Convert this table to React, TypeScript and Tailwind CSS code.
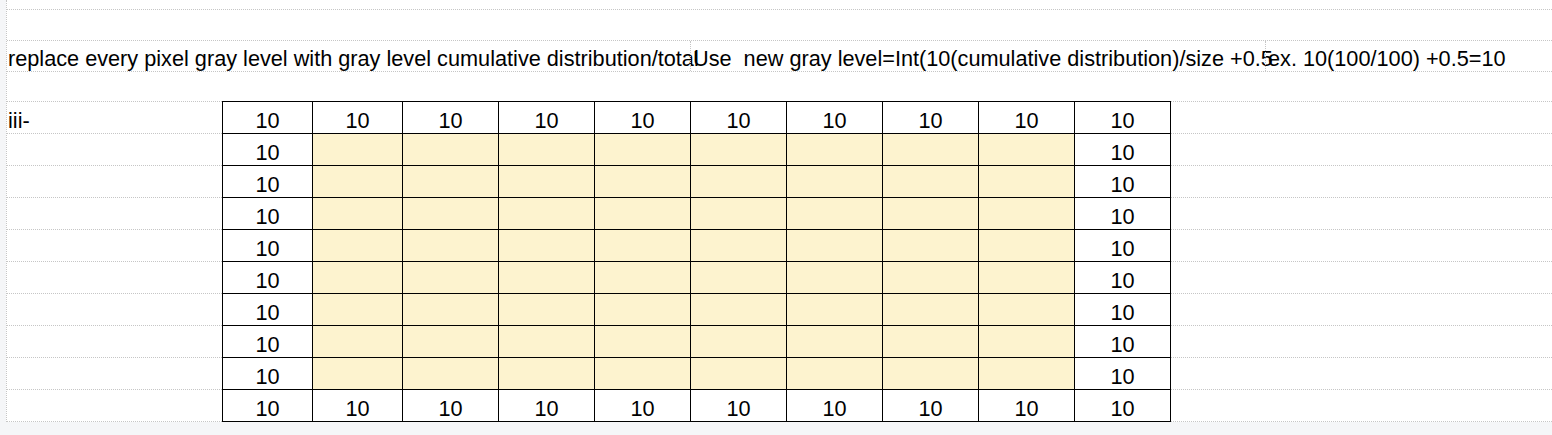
const widths = [90, 90, 96, 96, 96, 96, 96, 96, 96, 96];

const cellW: Record<number, string> = {
  90: "w-[90px]",
  96: "w-[96px]",
};

const Cell = ({ w, filled, value }: { w: number; filled: boolean; value?: string }) => {
  return (
    <div
      className={`${cellW[w]} h-[32px] shrink-0 border-r border-b border-black text-center pt-[7px] leading-[24px] ${
        filled ? "bg-[#fdf3cf]" : "bg-white"
      }`}
    >
      {value}
    </div>
  );
};

const GridTable = () => {
  const rows = Array.from({ length: 10 }, (_, r) => r);
  return (
    <div className="shrink-0 border-l border-t border-l-black border-t-black border-t-dotted">
      {rows.map((r) => (
        <div key={r} className="flex">
          {widths.map((w, c) => {
            const edge = r === 0 || r === 9 || c === 0 || c === 9;
            return <Cell key={c} w={w} filled={!edge} value={edge ? "10" : undefined} />;
          })}
        </div>
      ))}
    </div>
  );
};

const SideLines = ({ className, first }: { className: string; first?: string }) => {
  return (
    <div className={`${className} border-t border-dotted border-[#c6c6c6]`}>
      {Array.from({ length: 10 }, (_, i) => (
        <div key={i} className="h-[32px] border-b border-dotted border-[#c6c6c6] pt-[7px] pl-[1px] leading-[24px] whitespace-nowrap">
          {i === 0 ? first : null}
        </div>
      ))}
    </div>
  );
};

export default function App() {
  return (
    <div className="w-[1552px] h-[435px] bg-[#f5f6f8] flex overflow-hidden text-black text-[21.7px] font-['Liberation_Sans',Arial,Helvetica,sans-serif]">
      <div className="ml-[6px] flex-1 self-start bg-white border-l border-dotted border-[#c6c6c6] flex flex-col">
        <div className="h-[10px] border-b border-dotted border-[#c6c6c6]" />
        <div className="h-[31px] border-b border-dotted border-[#c6c6c6]" />
        <div className="h-[31px] border-b border-dotted border-[#c6c6c6] flex leading-[24px] whitespace-nowrap">
          <div className="w-[683px] shrink-0 min-w-0 pl-[1px] pt-[6px]">
            replace every pixel gray level with gray level cumulative distribution/total
          </div>
          <div className="w-[575px] shrink-0 min-w-0 border-l border-dotted border-[#c6c6c6] pl-[2px] pt-[6px]">
            Use&nbsp; new gray level=Int(10(cumulative distribution)/size +0.5
          </div>
          <div className="flex-1 min-w-0 border-l border-dotted border-[#c6c6c6] pl-[2px] pt-[6px]">
            ex. 10(100/100) +0.5=10
          </div>
        </div>
        <div className="h-[29px]" />
        <div className="flex">
          <SideLines className="w-[215px] shrink-0" first="iii-" />
          <GridTable />
          <SideLines className="flex-1" />
        </div>
      </div>
    </div>
  );
}
